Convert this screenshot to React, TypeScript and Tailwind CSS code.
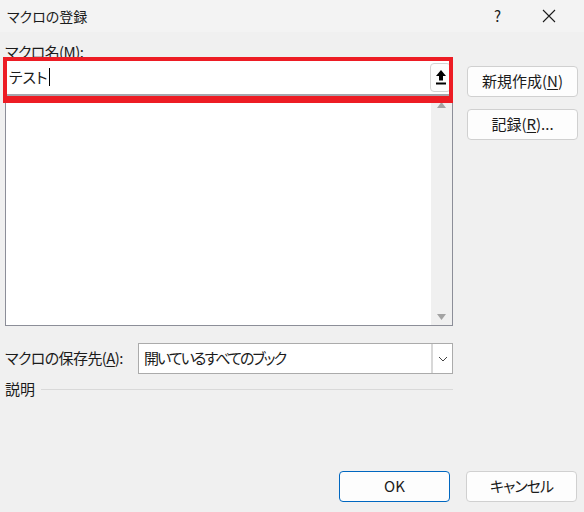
import React from "react";

const font = "font-['Yu_Gothic_UI','Noto_Sans_CJK_JP',sans-serif] [font-feature-settings:'palt']";

const DlgButton: React.FC<{ children: React.ReactNode; primary?: boolean }> = ({ children, primary }) => (
  <button
    className={`w-[111px] h-[31px] rounded-[4px] bg-[#fdfdfd] text-[15px] text-[#1b1b1b] ${
      primary ? "border-[1.5px] border-[#0067c0]" : "border border-[#d0d0d0]"
    }`}
  >
    {children}
  </button>
);

const App: React.FC = () => {
  return (
    <div className={`relative w-[584px] h-[512px] bg-[#f0f0f0] text-[#1b1b1b] ${font}`}>
      {/* title bar */}
      <div className="h-[32px] bg-[#f3f3f3] flex items-center pl-[7px] text-[14px]">
        <span>マクロの登録</span>
        <span className="ml-auto mr-[41px] text-[15px]">?</span>
        <svg width="14" height="14" viewBox="0 0 14 14" className="mr-[28px]">
          <path d="M1 1 L13 13 M13 1 L1 13" stroke="#1b1b1b" strokeWidth="1.1" />
        </svg>
      </div>

      <div className="flex">
        {/* left column */}
        <div className="ml-[5px] w-[448px] flex flex-col">
          <div className="mt-[11px] h-[17px] leading-[17px] text-[15px] tracking-[-0.6px]">マクロ名(M):</div>

          <div className="h-[36px] bg-white border-b-2 border-[#a6a6ad] flex items-center">
            <span className="ml-[4px] text-[15px]">テスト</span>
            <span className="w-[1px] h-[18px] bg-black ml-[1px]" />
            <div className="ml-auto mr-[2px] w-[21px] h-[29px] rounded-[4px] border border-[#d4d4d4] bg-[#fdfdfd] flex items-center justify-center">
              <svg width="10" height="15" viewBox="0 0 10 15">
                <path d="M5 0 L10 6 L7 6 L7 10.5 L3 10.5 L3 6 L0 6 Z" fill="#000" />
                <rect x="0" y="12.5" width="10" height="2" fill="#000" />
              </svg>
            </div>
          </div>

          <div className="h-[230px] bg-white border border-[#8c8e98] flex">
            <div className="flex-1" />
            <div className="w-[21px] bg-[#f0f0f0] flex flex-col items-center justify-between py-[5px]">
              <svg width="9" height="6" viewBox="0 0 9 6">
                <path d="M4.5 0 L9 6 L0 6 Z" fill="#a3a3a3" />
              </svg>
              <svg width="9" height="6" viewBox="0 0 9 6">
                <path d="M0 0 L9 0 L4.5 6 Z" fill="#a3a3a3" />
              </svg>
            </div>
          </div>

          <div className="mt-[17px] flex items-center text-[15px]">
            <span className="w-[133px] tracking-[-0.6px]">
              マクロの保存先(<span className="underline underline-offset-2">A</span>):
            </span>
            <div className="flex-1 h-[31px] bg-white border border-[#ababab] flex items-center">
              <span className="ml-[5px] tracking-[-1.9px]">開いているすべてのブック</span>
              <div className="ml-auto w-[21px] h-full border-l-2 border-[#d8d8d8] flex items-center justify-center">
                <svg width="10" height="6" viewBox="0 0 10 6">
                  <path d="M1 1 L5 5 L9 1" stroke="#444" strokeWidth="1" fill="none" />
                </svg>
              </div>
            </div>
          </div>

          <div className="mt-[4px] flex items-center text-[15px]">
            <span>説明</span>
            <div className="flex-1 ml-[6px] h-[1px] bg-[#d9d9d9]" />
          </div>
        </div>

        {/* right column */}
        <div className="ml-[14px] mt-[34px] flex flex-col gap-[12px]">
          <DlgButton>
            新規作成(<span className="underline underline-offset-2">N</span>)
          </DlgButton>
          <DlgButton>
            記録(<span className="underline underline-offset-2">R</span>)...
          </DlgButton>
        </div>
      </div>

      {/* bottom buttons */}
      <div className="absolute left-[339px] top-[471px] flex gap-[16px]">
        <DlgButton primary>OK</DlgButton>
        <DlgButton>
          <span className="tracking-[-1px]">キャンセル</span>
        </DlgButton>
      </div>

      {/* red annotation */}
      <div className="absolute left-[3px] top-[57px] w-[450px] h-[46px] border-[#ed1c24] border-x-[4px] border-t-[4px] border-b-[7px]" />
    </div>
  );
};

export default App;
